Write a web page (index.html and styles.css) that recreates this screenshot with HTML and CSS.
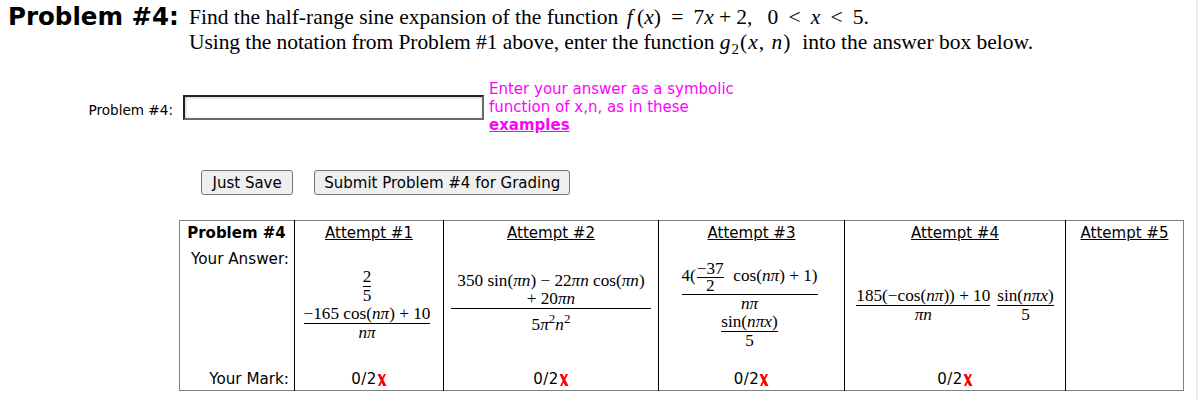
FILE: index.html
```html
<!DOCTYPE html>
<html lang="en">
<head>
<meta charset="UTF-8">
<title>Problem #4</title>
<link rel="stylesheet" href="styles.css">
</head>

<body>

<div class="page">

<div class="statement">
    <h2 class="problem-title">Problem #4:</h2>
    <div class="problem-text">
        <div>Find the half-range sine expansion of the function <i class="fn">f</i>&thinsp;(<i>x</i>) <span class="tail">&nbsp;=&nbsp; 7<i>x</i> + 2, &nbsp; 0 &nbsp;&lt;&nbsp; <i>x</i> &nbsp;&lt;&nbsp; 5.</span></div>
        <div><span class="lead">Using the notation from Problem #1 above, enter the function</span> <span class="gap"><i>g</i><sub>2</sub>(<i>x</i>, <i>n</i>)</span> &nbsp;into the answer box below.</div>
    </div>
</div>

<div class="answer-row">
    <label class="answer-label">Problem #4:</label>
    <input class="answer-box" type="text">
    <div class="hint">
        Enter your answer as a symbolic<br>
        function of x,n, as in these<br>
        <a href="#">examples</a>
    </div>
</div>

<div class="buttons">
    <button>Just Save</button>
    <button>Submit Problem #4 for Grading</button>
</div>

<table class="attempts">
    <colgroup>
        <col class="c0"><col class="c1"><col class="c2"><col class="c3"><col class="c4"><col class="c5">
    </colgroup>
    <tr class="head-row">
        <th>Problem #4</th>
        <td><a href="#">Attempt #1</a></td>
        <td><a href="#">Attempt #2</a></td>
        <td><a href="#">Attempt #3</a></td>
        <td><a href="#">Attempt #4</a></td>
        <td><a href="#">Attempt #5</a></td>
    </tr>
    <tr class="answer-cells">
        <th>Your Answer:</th>
        <td class="nudge">
            <div class="math stack">
                <div class="frac small"><div class="num">2</div><div>5</div></div>
                <div class="frac">
                    <div class="num">&minus;165 cos(<i>n&pi;</i>) + 10</div>
                    <div><i>n&pi;</i></div>
                </div>
            </div>
        </td>
        <td>
            <div class="math stack raised">
                <div class="frac">
                    <div class="num padded">350 sin(<i>&pi;n</i>) &minus; 22<i>&pi;n</i> cos(<i>&pi;n</i>)<br>+ 20<i>&pi;n</i></div>
                    <div class="tall">5<i>&pi;</i><sup>2</sup><i>n</i><sup>2</sup></div>
                </div>
            </div>
        </td>
        <td class="nudge">
            <div class="math stack">
                <div class="frac">
                    <div class="num">4(<span class="frac inline"><span class="num">&minus;37</span><span>2</span></span> &nbsp;cos(<i>n&pi;</i>) + 1)</div>
                    <div><i>n&pi;</i></div>
                </div>
                <div class="frac">
                    <div class="num">sin(<i>n&pi;x</i>)</div>
                    <div>5</div>
                </div>
            </div>
        </td>
        <td>
            <div class="math pair">
                <div class="frac">
                    <div class="num">185(&minus;cos(<i>n&pi;</i>)) + 10</div>
                    <div><i>&pi;n</i></div>
                </div>
                <div class="frac">
                    <div class="num">sin(<i>n&pi;x</i>)</div>
                    <div>5</div>
                </div>
            </div>
        </td>
        <td></td>
    </tr>
    <tr class="mark-row">
        <th>Your Mark:</th>
        <td><span class="mark">0/2</span><svg class="cross" viewBox="0 0 10 14"><path d="M.5 1H3.5L9.5 13H6.2ZM7 1H9L3 13H1Z"/></svg></td>
        <td><span class="mark">0/2</span><svg class="cross" viewBox="0 0 10 14"><path d="M.5 1H3.5L9.5 13H6.2ZM7 1H9L3 13H1Z"/></svg></td>
        <td><span class="mark">0/2</span><svg class="cross" viewBox="0 0 10 14"><path d="M.5 1H3.5L9.5 13H6.2ZM7 1H9L3 13H1Z"/></svg></td>
        <td><span class="mark">0/2</span><svg class="cross" viewBox="0 0 10 14"><path d="M.5 1H3.5L9.5 13H6.2ZM7 1H9L3 13H1Z"/></svg></td>
        <td></td>
    </tr>
</table>

</div>

<div class="scroll-edge"></div>

</body>
</html>
```

FILE: styles.css
```css
html, body {
    height: 100%;
}
body {
    margin: 0;
    display: flex;
    background: #fff;
    color: #000;
    font-family: "DejaVu Sans", Verdana, sans-serif;
    font-size: 14px;
    overflow: hidden;
}
.page {
    flex: 1;
    padding: 0 0 0 8px;
}
.scroll-edge {
    width: 2px;
    margin-right: 2px;
    background: #ececec;
}
.statement {
    display: flex;
    height: 60px;
}
.problem-title {
    margin: 2px 0 0;
    width: 181px;
    font-size: 24.5px;
    line-height: 30px;
    white-space: nowrap;
}
.problem-text {
    font-family: "Liberation Serif", "Times New Roman", serif;
    font-size: 21.5px;
    line-height: 25px;
    padding-top: 5px;
    white-space: nowrap;
}
.problem-text sub {
    font-size: 15px;
    line-height: 0;
}
.fn {
    margin-left: 3px;
}
.tail {
    word-spacing: -.3px;
}
.lead {
    letter-spacing: -.08px;
}
.gap {
    letter-spacing: 1px;
}
.answer-row {
    display: flex;
    align-items: center;
    margin-top: 20px;
    height: 54px;
}
.answer-label {
    width: 165px;
    text-align: right;
    font-size: 13.6px;
    margin: 5px 10px 0 0;
}
.answer-box {
    width: 301px;
    height: 25px;
    box-sizing: border-box;
    margin: 0 1px 0 0;
    border: 2px solid;
    border-color: #222 #6a6a6a #6a6a6a #222;
    box-shadow: inset 1px 1px 3px #ccc;
    padding: 0;
}
.hint {
    margin-left: 4px;
    color: #f0f;
    font-size: 15px;
    line-height: 18px;
}
.hint a {
    color: #f0f;
    font-weight: bold;
}
.buttons {
    display: flex;
    gap: 21px;
    margin: 36px 0 0 193px;
}
.buttons button {
    height: 25px;
    padding: 0 9px;
    font: 15px "DejaVu Sans", Verdana, sans-serif;
    color: #000;
    background: #efefef;
    border: 1px solid #767676;
    border-radius: 3px;
}
.buttons button:first-child {
    padding: 0 10.5px;
}
.attempts {
    margin: 25px 0 0 171px;
    width: 1005px;
    height: 171px;
    table-layout: fixed;
    border-collapse: collapse;
    border: 1px solid #808080;
    font-size: 15px;
}
.c0 { width: 115px; }
.c1 { width: 149px; }
.c2 { width: 215px; }
.c3 { width: 186px; }
.c4 { width: 221px; }
.attempts th,
.attempts td {
    padding: 0 4px;
    border: 0;
}
.attempts td {
    border-left: 1px solid #000;
    text-align: center;
}
.attempts td.nudge {
    padding-right: 8px;
}
.attempts th {
    text-align: right;
    font-size: 15.2px;
    font-weight: normal;
    vertical-align: top;
    padding-right: 5px;
}
.attempts a {
    color: #000;
}
.head-row {
    height: 22px;
}
.attempts .head-row td,
.attempts .head-row th {
    padding-top: 2px;
}
.attempts .head-row th {
    font-size: 15px;
    font-weight: bold;
    text-align: center;
    vertical-align: middle;
}
.attempts .answer-cells th {
    padding-top: 7px;
}
.attempts .answer-cells td {
    padding-top: 2px;
}
.mark-row {
    height: 25px;
}
.attempts .mark-row th,
.attempts .mark-row td {
    vertical-align: middle;
    padding-top: 2px;
}
.mark {
    letter-spacing: .5px;
}
.cross {
    width: 10px;
    height: 14px;
    vertical-align: -3px;
    fill: #f00;
}
.math {
    font-family: "Liberation Serif", "Times New Roman", serif;
    font-size: 17.2px;
    line-height: 18px;
}
.stack {
    display: flex;
    flex-direction: column;
    align-items: center;
}
.raised {
    padding-bottom: 4px;
}
.frac {
    display: inline-flex;
    flex-direction: column;
    align-items: center;
    vertical-align: middle;
}
.frac.inline {
    line-height: 16px;
    margin: 0 1px;
}
.frac .num {
    border-bottom: 1px solid #000;
    align-self: stretch;
}
.frac .padded {
    padding: 0 6px;
}
.tall {
    padding-top: 7px;
}
.math sup {
    font-size: 13px;
    line-height: 0;
}
.pair {
    display: flex;
    justify-content: center;
    gap: 7px;
}
```
